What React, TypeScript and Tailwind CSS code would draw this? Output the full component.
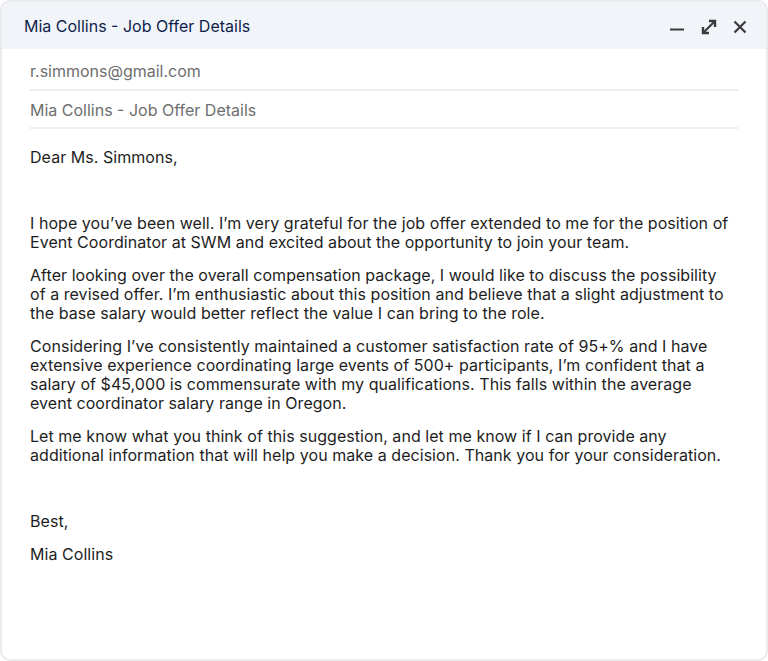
import React from "react";

export default function App() {
  const paragraphs = [
    "Dear Ms. Simmons,",
    "",
    "I hope you’ve been well. I’m very grateful for the job offer extended to me for the position of Event Coordinator at SWM and excited about the opportunity to join your team.",
    "After looking over the overall compensation package, I would like to discuss the possibility of a revised offer. I’m enthusiastic about this position and believe that a slight adjustment to the base salary would better reflect the value I can bring to the role.",
    "Considering I’ve consistently maintained a customer satisfaction rate of 95+% and I have extensive experience coordinating large events of 500+ participants, I’m confident that a salary of $45,000 is commensurate with my qualifications. This falls within the average event coordinator salary range in Oregon.",
    "Let me know what you think of this suggestion, and let me know if I can provide any additional information that will help you make a decision. Thank you for your consideration.",
    "",
    "Best,",
    "Mia Collins",
  ];
  return (
    <div
      className="w-[768px] h-[661px] bg-white"
      style={{ fontFamily: "Inter, 'Noto Sans', sans-serif" }}
    >
      <div className="w-full h-full flex flex-col rounded-[10px] border-2 border-[#ebebeb] overflow-hidden bg-white">
        <div className="h-[47px] shrink-0 bg-[#f1f5fa] flex items-center justify-between pl-[22px] pr-[18px]">
          <span className="text-[16px] text-[#0f1d4a]">Mia Collins - Job Offer Details</span>
          <div className="flex items-center gap-[14px] text-[#3a3a3a] pt-[3px]">
            <svg width="18" height="18" viewBox="0 0 18 18" fill="none">
              <path d="M2 11.5h14" stroke="currentColor" strokeWidth="2.2" />
            </svg>
            <svg width="18" height="18" viewBox="0 0 18 18" fill="none">
              <path d="M4 14L14 4" stroke="currentColor" strokeWidth="2.2" />
              <path d="M9 3h6v6" stroke="currentColor" strokeWidth="2.4" />
              <path d="M3 9v6h6" stroke="currentColor" strokeWidth="2.4" />
            </svg>
            <svg width="16" height="16" viewBox="0 0 16 16" fill="none">
              <path d="M2.5 2.5l11 11M13.5 2.5l-11 11" stroke="currentColor" strokeWidth="2.2" />
            </svg>
          </div>
        </div>
        <div className="px-[28px]">
          <div className="h-[42px] flex items-center border-b-2 border-[#efefef] text-[16px] text-[#6e6e6e] pt-[3px]">
            r.simmons@gmail.com
          </div>
          <div className="h-[38px] flex items-center border-b-2 border-[#efefef] text-[16px] text-[#6e6e6e] pt-[2px]">
            Mia Collins - Job Offer Details
          </div>
        </div>
        <div className="pl-[28px] pr-[31px] pt-[19px] flex flex-col gap-[14px] text-[16px] leading-[19px] tracking-[0.05px] text-[#1e1e1e]">
          {paragraphs.map((p, i) => (
            <p key={i} className="min-h-[19px]">
              {p}
            </p>
          ))}
        </div>
      </div>
    </div>
  );
}
